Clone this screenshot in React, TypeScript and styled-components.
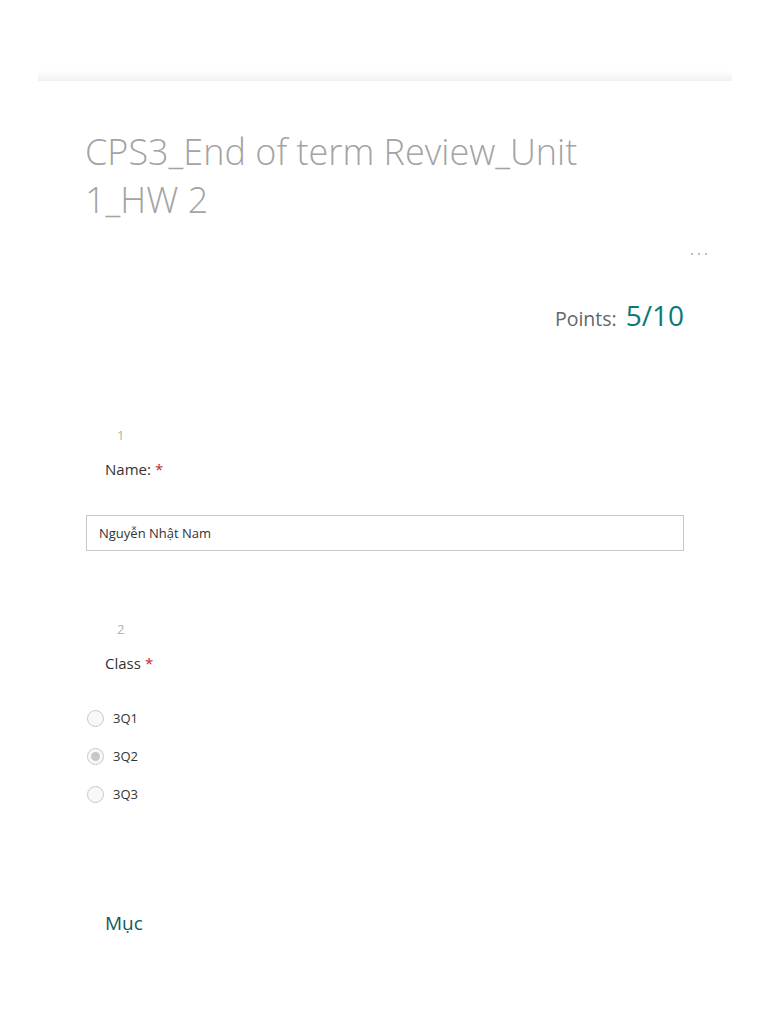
import React from "react";
import styled, { createGlobalStyle } from "styled-components";

const GlobalStyle = createGlobalStyle`
  body {
    margin: 0;
    background: #ffffff;
    font-family: "Open Sans", "Noto Sans", sans-serif;
  }
`;

const StyledPage = styled.div`
  padding: 70px 36px 0 38px;
  height: 954px;
  overflow: hidden;
`;
const StyledCard = styled.div`
  width: 694px;
`;
const StyledTopShadow = styled.div`
  height: 10px;
  background: linear-gradient(to bottom, rgba(0, 0, 0, 0), rgba(0, 0, 0, 0.05));
  border-bottom: 1px solid #f0f0f0;
`;
const StyledBody = styled.div`
  padding: 0 24px 0 48px;
`;
const StyledTitle = styled.h1`
  margin: 47px 0 0 -1px;
  max-width: 540px;
  font-size: 36px;
  line-height: 48px;
  font-weight: 300;
  color: #a3a3a3;
`;
const StyledMoreRow = styled.div`
  display: flex;
  justify-content: flex-end;
  gap: 5px;
  height: 20px;
  align-items: center;
  margin-top: 20px;
  padding-right: 1px;
`;
const StyledDot = styled.span`
  width: 2px;
  height: 2px;
  border-radius: 50%;
  background: #a8a8a8;
`;
const StyledPointsRow = styled.div`
  display: flex;
  justify-content: flex-end;
  align-items: baseline;
  gap: 9px;
  margin: 31px 24px 0 0;
  height: 40px;
  line-height: 40px;
`;
const StyledPointsLabel = styled.span`
  font-size: 19.5px;
  color: #666666;
`;
const StyledPointsValue = styled.span`
  font-size: 28px;
  color: #0b7a76;
`;
const StyledQuestion = styled.div<{ $gap: number }>`
  margin: ${(p) => p.$gap}px 24px 0 0;
`;
const StyledNumber = styled.div`
  padding-left: 31px;
  font-size: 13px;
  line-height: 18px;
  color: #b0b0b0;
`;
const StyledLabel = styled.div`
  margin-top: 14px;
  padding-left: 19px;
  font-size: 15px;
  line-height: 22px;
  color: #333333;
`;
const StyledRequired = styled.span`
  color: #c4262e;
  margin-left: 4px;
`;
const StyledInput = styled.input`
  display: block;
  box-sizing: border-box;
  width: 598px;
  height: 36px;
  margin-top: 35px;
  padding: 0 12px;
  border: 1px solid #c8c8c8;
  font-family: inherit;
  font-size: 13px;
  color: #333333;
  outline: none;
`;
const StyledOptions = styled.div`
  display: flex;
  flex-direction: column;
  gap: 14px;
  margin-top: 32px;
`;
const StyledOption = styled.label`
  display: flex;
  align-items: center;
  gap: 9px;
  height: 24px;
  padding-left: 1px;
  font-size: 13px;
  color: #333333;
`;
const StyledRadio = styled.span<{ $checked?: boolean }>`
  box-sizing: border-box;
  width: 17px;
  height: 17px;
  border-radius: 50%;
  border: 1px solid #c8c8c8;
  background: #f8f8f8;
  display: flex;
  align-items: center;
  justify-content: center;
  &::after {
    content: "";
    width: 9px;
    height: 9px;
    border-radius: 50%;
    background: ${(p) => (p.$checked ? "#c8c8c8" : "transparent")};
  }
`;
const StyledSection = styled.div`
  margin-top: 103px;
  padding-left: 19px;
  font-size: 19px;
  line-height: 28px;
  color: #135c5c;
`;

const options = ["3Q1", "3Q2", "3Q3"];

const App = () => {
  return (
    <>
      <GlobalStyle />
      <StyledPage>
        <StyledCard>
          <StyledTopShadow />
          <StyledBody>
            <StyledTitle>CPS3_End of term Review_Unit 1_HW 2</StyledTitle>
            <StyledMoreRow>
              <StyledDot />
              <StyledDot />
              <StyledDot />
            </StyledMoreRow>
            <StyledPointsRow>
              <StyledPointsLabel>Points:</StyledPointsLabel>
              <StyledPointsValue>5/10</StyledPointsValue>
            </StyledPointsRow>

            <StyledQuestion $gap={91}>
              <StyledNumber>1</StyledNumber>
              <StyledLabel>
                Name:<StyledRequired>*</StyledRequired>
              </StyledLabel>
              <StyledInput defaultValue="Nguyễn Nhật Nam" />
            </StyledQuestion>

            <StyledQuestion $gap={69}>
              <StyledNumber>2</StyledNumber>
              <StyledLabel>
                Class<StyledRequired>*</StyledRequired>
              </StyledLabel>
              <StyledOptions>
                {options.map((o) => (
                  <StyledOption key={o}>
                    <StyledRadio $checked={o === "3Q2"} />
                    {o}
                  </StyledOption>
                ))}
              </StyledOptions>
            </StyledQuestion>

            <StyledSection>Mục</StyledSection>
          </StyledBody>
        </StyledCard>
      </StyledPage>
    </>
  );
};

export default App;
